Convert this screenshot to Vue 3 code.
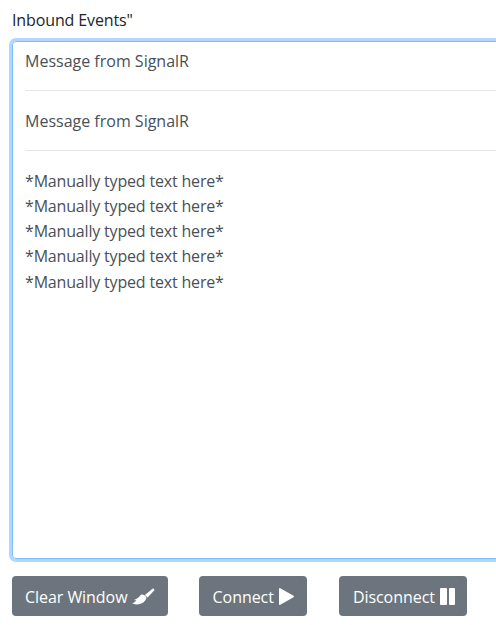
<script setup>
const messages = ['Message from SignalR', 'Message from SignalR']
const typed = Array(5).fill('*Manually typed text here*')
</script>

<template>
  <main class="page">
    <label class="label">Inbound Events"</label>
    <div class="box">
      <template v-for="(m, i) in messages" :key="i">
        <p class="line">{{ m }}</p>
        <hr class="rule" />
      </template>
      <p v-for="(t, i) in typed" :key="'t' + i" class="line typed">{{ t }}</p>
    </div>
    <div class="actions">
      <button class="btn" type="button">
        Clear Window
        <svg class="broom" viewBox="0 0 24 18" aria-hidden="true">
          <path d="M13.5 7.5 22.2.3l1.5 1.7-7.3 8z" fill="#fff" />
          <path d="M9.5 7c-1.8 2.6-4.4 4.8-7.5 5.8.8.3 1.6.3 2.4.1-.8 1.4-2.2 2.6-4.4 3.2 2 1 4.4 1.4 7 1.2 4-.4 7-3 8.2-6.6C14.6 8.4 12.4 6.8 9.5 7z" fill="#fff" />
        </svg>
      </button>
      <button class="btn connect" type="button">
        Connect
        <svg class="play" viewBox="0 0 15 17" aria-hidden="true">
          <path d="M0 .8C0 .1.7-.2 1.3.2l13.2 7.5c.6.4.6 1.2 0 1.6L1.3 16.8C.7 17.2 0 16.9 0 16.2z" fill="#fff" />
        </svg>
      </button>
      <button class="btn disconnect" type="button">
        Disconnect
        <svg class="pause" viewBox="0 0 15 17" aria-hidden="true">
          <rect x="0" y="0" width="7" height="17" rx="1" fill="#fff" />
          <rect x="9" y="0" width="6" height="17" rx="1" fill="#fff" />
        </svg>
      </button>
    </div>
  </main>
</template>

<style>
html, body { margin: 0; background: #fff; }
</style>

<style scoped>
.page {
  width: 496px;
  height: 625px;
  box-sizing: border-box;
  padding: 8px 0 0 12px;
  overflow: hidden;
  font-family: "Open Sans", "Noto Sans", sans-serif;
  font-size: 16px;
}
.label {
  display: block;
  line-height: 25.2px;
  margin-bottom: 8px;
  color: #212529;
  letter-spacing: -0.12px;
}
.box {
  width: 560px;
  height: 518px;
  box-sizing: border-box;
  padding: 7px 12px;
  border: 1px solid #80bdff;
  border-radius: 4px;
  box-shadow: 0 0 0 3px rgba(0, 123, 255, 0.3);
  color: #495057;
}
.line { margin: 0; line-height: 25.2px; }
.typed { letter-spacing: -0.18px; }
.rule {
  margin: 16px 0 17.6px;
  border: 0;
  border-top: 1px solid rgba(0, 0, 0, 0.1);
}
.actions {
  display: flex;
  gap: 31px;
  margin-top: 17px;
}
.btn {
  display: inline-flex;
  align-items: center;
  gap: 4px;
  height: 40px;
  padding: 1px 13px 0;
  border: 0;
  border-radius: 4px;
  background: #6c757d;
  color: #fff;
  font: inherit;
  letter-spacing: -0.05px;
  white-space: nowrap;
}
.connect { gap: 5px; padding-left: 14px; }
.disconnect { gap: 5px; margin-left: 1px; padding-left: 14px; padding-right: 12px; }
.broom { width: 23px; height: 17px; }
.play { width: 15px; height: 17px; }
.pause { width: 15px; height: 17px; }
</style>
